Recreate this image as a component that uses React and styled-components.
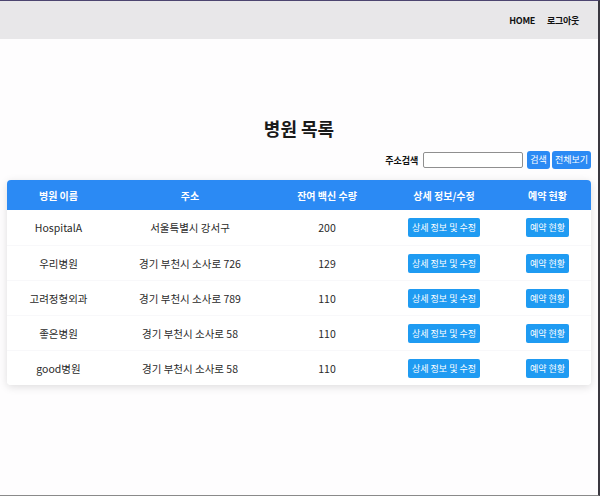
import React from 'react';
import styled, { createGlobalStyle } from 'styled-components';

const GlobalStyle = createGlobalStyle`
    html, body {
        margin: 0;
        padding: 0;
        background: #fefdfe;
    }
    body {
        font-family: "Noto Sans CJK KR", "Noto Sans", sans-serif;
    }
`;

const Frame = styled.div`
    width: 600px;
    height: 496px;
    box-sizing: border-box;
    border-top: 1px solid #4d4570;
    border-right: 2px solid #3a3840;
    border-bottom: 1px solid #8a8a8a;
    background: #fefdfe;
    overflow: hidden;
`;

const NavBar = styled.nav`
    height: 38px;
    background: #e8e7e9;
    display: flex;
    justify-content: flex-end;
    align-items: center;
    gap: 12px;
    padding-right: 19px;

    a {
        font-size: 9px;
        font-weight: 700;
        color: #111;
        text-decoration: none;
        letter-spacing: -0.3px;
    }
`;

const Main = styled.main`
    padding: 0 7px 0 7px;
`;

const Title = styled.h1`
    margin: 74px 0 0;
    height: 30px;
    line-height: 30px;
    font-size: 18px;
    font-weight: 700;
    color: #1a1a1a;
    text-align: center;
`;

const SearchRow = styled.form`
    display: flex;
    justify-content: flex-end;
    align-items: center;
    gap: 4px;
    margin-top: 8px;
    height: 18px;

    label {
        font-size: 9px;
        font-weight: 700;
        color: #111;
        margin-right: 1px;
    }

    input {
        width: 100px;
        height: 16px;
        box-sizing: border-box;
        border: 1px solid #8f8f8f;
        border-radius: 2px;
        padding: 0 3px;
    }
`;

const SmallButton = styled.button`
    height: 18px;
    padding: 0 3px;
    border: none;
    border-radius: 3px;
    background: #2b8af4;
    color: #fff;
    font-family: inherit;
    font-size: 9px;
    line-height: 18px;
    cursor: pointer;
    margin-left: ${props => props.tight ? '-2px' : '0'};
`;

const Card = styled.div`
    margin-top: 11px;
    background: #fff;
    border-radius: 4px;
    box-shadow: 0 2px 8px rgba(0, 0, 0, 0.13);
    overflow: hidden;
`;

const Row = styled.div`
    display: grid;
    grid-template-columns: 103px 160px 114px 120px 1fr;
    align-items: center;
    height: ${props => props.head ? '30px' : '35px'};
    background: ${props => props.head ? '#2b8af4' : '#fff'};
    color: ${props => props.head ? '#fff' : '#2a2a2a'};
    font-size: ${props => props.head ? '10px' : '10.5px'};
    font-weight: ${props => props.head ? 700 : 400};
    border-top: ${props => props.head ? 'none' : '1px solid #f8f8fa'};
    box-sizing: border-box;

    &:nth-child(2) {
        border-top: none;
    }
`;

const Cell = styled.div`
    text-align: center;
    white-space: nowrap;
`;

const RowButton = styled.button`
    height: 19px;
    padding: 0 4px;
    border: none;
    border-radius: 2px;
    background: #1f9bf2;
    color: #fff;
    font-family: inherit;
    font-size: 9px;
    line-height: 19px;
    cursor: pointer;
`;

const hospitals = [
    { name: 'HospitalA', address: '서울특별시 강서구', count: 200 },
    { name: '우리병원', address: '경기 부천시 소사로 726', count: 129 },
    { name: '고려정형외과', address: '경기 부천시 소사로 789', count: 110 },
    { name: '좋은병원', address: '경기 부천시 소사로 58', count: 110 },
    { name: 'good병원', address: '경기 부천시 소사로 58', count: 110 },
];

const App = () => {
    return (
        <Frame>
            <GlobalStyle />
            <NavBar>
                <a href="#home">HOME</a>
                <a href="#logout">로그아웃</a>
            </NavBar>
            <Main>
                <Title>병원 목록</Title>
                <SearchRow onSubmit={(e) => e.preventDefault()}>
                    <label htmlFor="address-search">주소검색</label>
                    <input id="address-search" type="text" />
                    <SmallButton type="submit">검색</SmallButton>
                    <SmallButton type="button" tight>전체보기</SmallButton>
                </SearchRow>
                <Card>
                    <Row head>
                        <Cell>병원 이름</Cell>
                        <Cell>주소</Cell>
                        <Cell>잔여 백신 수량</Cell>
                        <Cell>상세 정보/수정</Cell>
                        <Cell>예약 현황</Cell>
                    </Row>
                    {hospitals.map((h, i) => (
                        <Row key={i}>
                            <Cell>{h.name}</Cell>
                            <Cell>{h.address}</Cell>
                            <Cell>{h.count}</Cell>
                            <Cell><RowButton>상세 정보 및 수정</RowButton></Cell>
                            <Cell><RowButton>예약 현황</RowButton></Cell>
                        </Row>
                    ))}
                </Card>
            </Main>
        </Frame>
    );
};

export default App;
